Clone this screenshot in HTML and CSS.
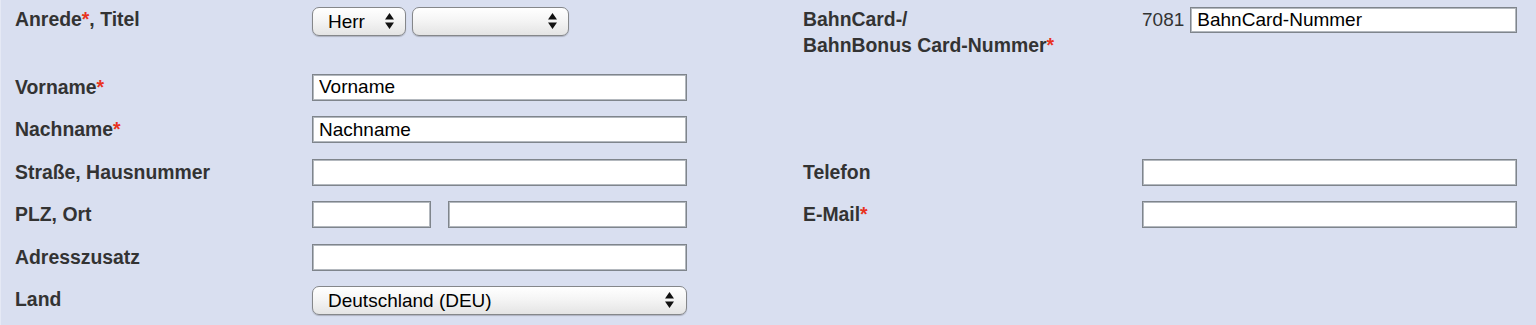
FILE: index.html
```html
<!DOCTYPE html>
<html lang="de">
<head>
<meta charset="utf-8">
<title>Kundendaten</title>
<link rel="stylesheet" href="styles.css">
</head>
<body>
<div class="page">
  <div class="form">
    <div class="row row-first">
      <div class="label">Anrede<span class="req">*</span>, Titel</div>
      <div class="field field-first">
        <span class="sel-wrap">
          <select class="select sel-herr"><option>Herr</option></select>
          <svg class="arrows" viewBox="0 0 9 16"><path d="M0 6.5 L4.5 0 L9 6.5 Z M0 9.5 L9 9.5 L4.5 16 Z" fill="#111"/></svg>
        </span>
        <span class="sel-wrap">
          <select class="select sel-titel"><option></option></select>
          <svg class="arrows" viewBox="0 0 9 16"><path d="M0 6.5 L4.5 0 L9 6.5 Z M0 9.5 L9 9.5 L4.5 16 Z" fill="#111"/></svg>
        </span>
      </div>
      <div class="label">BahnCard-/<br>BahnBonus Card-Nummer<span class="req">*</span></div>
      <div class="field field-first card">
        <span class="prefix">7081</span>
        <input class="input input-card" type="text" value="BahnCard-Nummer">
      </div>
    </div>

    <div class="row">
      <div class="label">Vorname<span class="req">*</span></div>
      <div class="field"><input class="input input-full" type="text" value="Vorname"></div>
    </div>

    <div class="row">
      <div class="label">Nachname<span class="req">*</span></div>
      <div class="field"><input class="input input-full" type="text" value="Nachname"></div>
    </div>

    <div class="row">
      <div class="label">Straße, Hausnummer</div>
      <div class="field"><input class="input input-full" type="text"></div>
      <div class="label">Telefon</div>
      <div class="field"><input class="input input-full" type="text"></div>
    </div>

    <div class="row">
      <div class="label">PLZ, Ort</div>
      <div class="field plz-ort">
        <input class="input input-plz" type="text">
        <input class="input input-ort" type="text">
      </div>
      <div class="label">E-Mail<span class="req">*</span></div>
      <div class="field"><input class="input input-full" type="text"></div>
    </div>

    <div class="row">
      <div class="label">Adresszusatz</div>
      <div class="field"><input class="input input-full" type="text"></div>
    </div>

    <div class="row">
      <div class="label">Land</div>
      <div class="field">
        <span class="sel-wrap">
          <select class="select sel-land"><option>Deutschland (DEU)</option></select>
          <svg class="arrows arrows-land" viewBox="0 0 9 16"><path d="M0 6.5 L4.5 0 L9 6.5 Z M0 9.5 L9 9.5 L4.5 16 Z" fill="#111"/></svg>
        </span>
      </div>
    </div>
  </div>
</div>
</body>
</html>
```

FILE: styles.css
```css
html, body {
  margin: 0;
  padding: 0;
  background: #d9dff0;
}

.page {
  min-height: 325px;
  box-sizing: border-box;
  border-left: 1px solid #e5e9f5;
  padding: 6px 0 0 14px;
  font-family: "Liberation Sans", Arial, Helvetica, sans-serif;
  font-size: 19px;
  color: #333;
}

.form {
  display: flex;
  flex-direction: column;
  gap: 15.5px;
}

.row {
  display: grid;
  grid-template-columns: 297px 491px 339px 375px;
  align-items: start;
}

.label {
  font-weight: bold;
  font-size: 19.4px;
  line-height: 26px;
  color: #333;
  white-space: nowrap;
}

.req {
  color: #e8331f;
}

.field {
  display: flex;
  align-items: center;
}

.field-first {
  margin-top: 1px;
}

.card {
  gap: 6px;
}

.prefix {
  color: #333;
  line-height: 26px;
}

.plz-ort {
  gap: 17px;
}

.input {
  box-sizing: border-box;
  height: 27px;
  margin: 0;
  border: 1px solid #7f858c;
  box-shadow: inset 0 0 0 1px #b3b8be;
  background: #fff;
  padding: 0 6px;
  font-family: "Liberation Sans", Arial, Helvetica, sans-serif;
  font-size: 19px;
  color: #000;
  outline: none;
}

.input-full {
  width: 375px;
}

.input-card {
  width: 327px;
  height: 26px;
}

.input-plz {
  width: 119px;
}

.input-ort {
  width: 239px;
}

.sel-wrap {
  position: relative;
  display: inline-block;
  margin-right: 6px;
  height: 29px;
}

.select {
  appearance: none;
  -webkit-appearance: none;
  box-sizing: border-box;
  height: 29px;
  margin: 0;
  border: 1px solid #85878a;
  border-radius: 7px;
  background: linear-gradient(#ffffff 0%, #f5f5f5 45%, #e4e4e4 100%);
  box-shadow: 0 1px 1px rgba(0, 0, 0, 0.2);
  padding: 0 28px 0 15px;
  font-family: "Liberation Sans", Arial, Helvetica, sans-serif;
  font-size: 19px;
  color: #000;
  outline: none;
}

.sel-herr {
  width: 94px;
}

.sel-titel {
  width: 157px;
}

.sel-land {
  width: 375px;
}

.arrows {
  position: absolute;
  right: 12px;
  top: 6px;
  width: 9px;
  height: 16px;
  pointer-events: none;
}

.arrows-land {
  right: 13px;
}
```
